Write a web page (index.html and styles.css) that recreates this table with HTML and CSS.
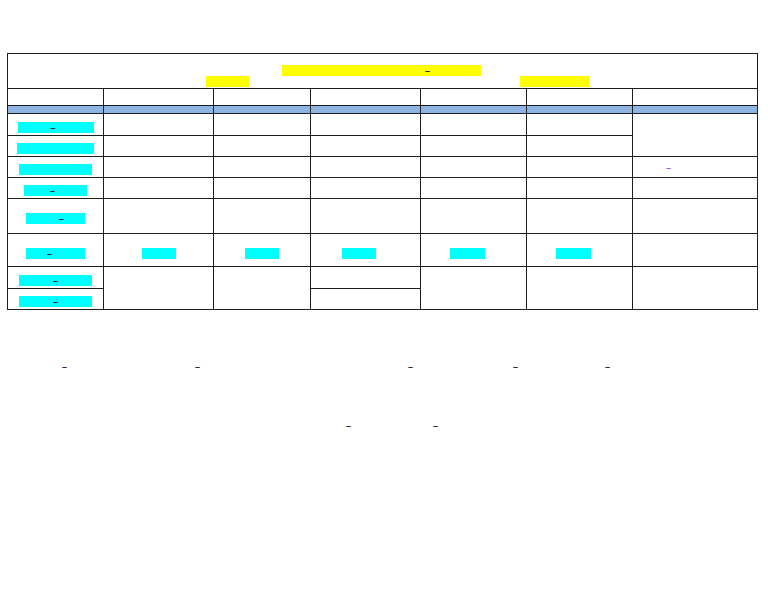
FILE: index.html
```html
<!DOCTYPE html>
<html>
<head>
<meta charset="utf-8">
<link rel="stylesheet" href="styles.css">
</head>
<body>
<div class="sheet">
  <div class="c title">
    <div class="t-line"><span class="hl hl-main"><span class="d">–</span></span></div>
    <div class="t-line"><span class="hl hl-a"></span><span class="hl hl-b"></span></div>
  </div>

  <div class="c head"></div><div class="c head"></div><div class="c head"></div><div class="c head"></div><div class="c head"></div><div class="c head"></div><div class="c head"></div>

  <div class="c band"></div><div class="c band"></div><div class="c band"></div><div class="c band"></div><div class="c band"></div><div class="c band"></div><div class="c band"></div>

  <!-- row 1 -->
  <div class="c lab"><span class="tag w76 p33"><span class="d">–</span></span></div>
  <div class="c"></div><div class="c"></div><div class="c"></div><div class="c"></div><div class="c"></div>
  <div class="c span2"></div>
  <!-- row 2 -->
  <div class="c lab"><span class="tag w77"></span></div>
  <div class="c"></div><div class="c"></div><div class="c"></div><div class="c"></div><div class="c"></div>
  <!-- row 3 -->
  <div class="c lab"><span class="tag w73"></span></div>
  <div class="c"></div><div class="c"></div><div class="c"></div><div class="c"></div><div class="c"></div>
  <div class="c note-cell"><span class="d purple">–</span></div>
  <!-- row 4 -->
  <div class="c lab"><span class="tag w63 p26"><span class="d">–</span></span></div>
  <div class="c"></div><div class="c"></div><div class="c"></div><div class="c"></div><div class="c"></div><div class="c"></div>
  <!-- row 5 -->
  <div class="c lab"><span class="tag w59 p33"><span class="d">–</span></span></div>
  <div class="c"></div><div class="c"></div><div class="c"></div><div class="c"></div><div class="c"></div><div class="c"></div>
  <!-- row 6 -->
  <div class="c lab lab6"><span class="tag w59 p21"><span class="d">–</span></span></div>
  <div class="c mid"><span class="tag w34"></span></div>
  <div class="c mid"><span class="tag w34"></span></div>
  <div class="c mid"><span class="tag w34 off"></span></div>
  <div class="c mid"><span class="tag w35 off"></span></div>
  <div class="c mid"><span class="tag w35 off"></span></div>
  <div class="c"></div>
  <!-- row 7 -->
  <div class="c lab"><span class="tag w73 p34"><span class="d">–</span></span></div>
  <div class="c span2"></div>
  <div class="c span2"></div>
  <div class="c"></div>
  <div class="c span2"></div>
  <div class="c span2"></div>
  <div class="c span2"></div>
  <!-- row 8 -->
  <div class="c lab"><span class="tag w73 p34"><span class="d">–</span></span></div>
  <div class="c"></div>
</div>

<div class="notes">
  <div class="n-line l1">
    <span class="d m1">–</span><span class="d m2">–</span><span class="d m3">–</span><span class="d m4">–</span><span class="d m5">–</span>
  </div>
  <div class="n-line l2">
    <span class="d m6">–</span><span class="d m7">–</span>
  </div>
</div>
</body>
</html>
```

FILE: styles.css
```css
html, body {
  margin: 0;
  padding: 0;
  background: #ffffff;
}

body {
  font-family: "Liberation Sans", Arial, sans-serif;
  color: #2a2a2a;
}

.sheet {
  margin: 53px 0 0 7px;
  width: 751px;
  box-sizing: border-box;
  border-left: 1px solid #1e1e1e;
  border-top: 1px solid #1e1e1e;
  display: grid;
  grid-template-columns: 96px 110px 97px 110px 106px 106px 125px;
  grid-template-rows: 35px 17px 8px 22px 21px 21px 21px 35px 33px 22px 21px;
}

.c {
  box-sizing: border-box;
  border-right: 1px solid #1e1e1e;
  border-bottom: 1px solid #1e1e1e;
}

.title {
  grid-column: 1 / span 7;
  padding-top: 11px;
  display: flex;
  flex-direction: column;
}

.t-line {
  display: flex;
  height: 11px;
}

.hl {
  display: block;
  height: 11px;
  background: #ffff00;
}

.hl-main {
  width: 199px;
  margin-left: 274px;
  padding-left: 143px;
  box-sizing: border-box;
}

.hl-a {
  width: 43px;
  margin-left: 198px;
}

.hl-b {
  width: 69px;
  margin-left: 271px;
}

.head {
  border-bottom: 1px solid #1a1a1a;
}

.band {
  background: #8db4e3;
  border-bottom: 1px solid #1a1a1a;
}

.span2 {
  grid-row: span 2;
}

.lab, .mid {
  display: flex;
  justify-content: center;
  align-items: center;
  padding-top: 5px;
}

.mid, .lab6 {
  padding-top: 6px;
}

.tag {
  display: block;
  height: 11px;
  background: #00ffff;
  box-sizing: border-box;
}

.w76 { width: 76px; }
.w77 { width: 77px; }
.w73 { width: 73px; }
.w63 { width: 63px; }
.w59 { width: 59px; }
.w34 { width: 34px; }
.w35 { width: 35px; }

.p21 { padding-left: 21px; }
.p26 { padding-left: 26px; }
.p33 { padding-left: 33px; }
.p34 { padding-left: 34px; }

.off { margin-right: 13px; }

.d {
  display: inline-block;
  box-sizing: border-box;
  font-size: 9px;
  font-weight: bold;
  line-height: 11px;
  height: 11px;
  padding-top: 1px;
  vertical-align: top;
  color: #2a2a2a;
}

.purple {
  color: #9a5ce0;
}

.note-cell {
  display: flex;
  align-items: center;
  padding-left: 33px;
  padding-top: 1px;
}

.notes {
  margin-top: 51px;
}

.n-line {
  display: flex;
  height: 11px;
}

.l2 {
  margin-top: 48px;
}

.m1 { margin-left: 62px; }
.m2 { margin-left: 128px; }
.m3 { margin-left: 208px; }
.m4 { margin-left: 100px; }
.m5 { margin-left: 87px; }
.m6 { margin-left: 346px; }
.m7 { margin-left: 82px; }
```
